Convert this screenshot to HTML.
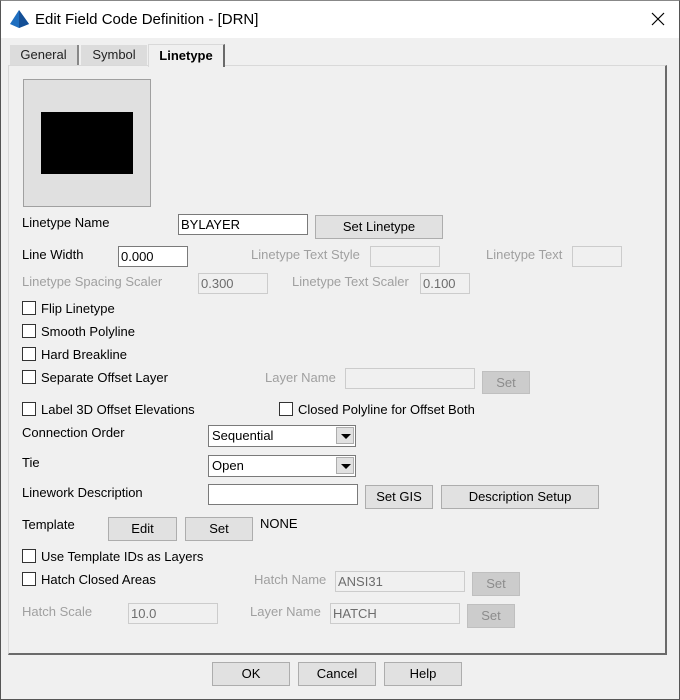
<!DOCTYPE html>
<html><head><style>
*{box-sizing:border-box;margin:0;padding:0}
body{width:680px;height:700px;background:#f0f0f0;font-family:"Liberation Sans",sans-serif;font-size:13px;color:#000;position:relative;overflow:hidden}
.a{position:absolute;white-space:nowrap}
.g{color:#a0a0a0}
.in{position:absolute;background:#fff;border:1px solid #7a7a7a;padding:2px 2px 0;font-size:13px;line-height:15px}
.dis{position:absolute;background:#f0f0f0;border:1px solid #ccc;color:#6d6d6d;padding:2px 2px 0;line-height:15px}
.btn{position:absolute;background:#e1e1e1;border:1px solid #adadad;text-align:center;line-height:21px}
.dbtn{position:absolute;background:#ccc;border:1px solid #bfbfbf;color:#8c8c8c;text-align:center;line-height:21px}
.cb{position:absolute;width:14px;height:14px;border:1px solid #333;background:#fff}
.sel{position:absolute;background:#fff;border:1px solid #7a7a7a;padding:2px 3px 0;line-height:15px}
.sel i{position:absolute;right:1px;top:1px;width:18px;height:17px;background:#e1e1e1;border:1px solid #adadad}
.sel i:after{content:"";position:absolute;left:4px;top:6px;border-left:5px solid transparent;border-right:5px solid transparent;border-top:5px solid #000}
</style></head><body>
<div class="a" style="left:0;top:0;width:680px;height:38px;background:#fff"></div>
<div class="a" style="left:0;top:0;width:680px;height:700px;border:1px solid #555;border-top:1px solid #888"></div>
<svg class="a" style="left:10px;top:10px" width="19" height="18" viewBox="0 0 19 18"><polygon points="9,0 0,14 9,18 19,14" fill="#1f6fc0"/><polygon points="9,0 9,18 19,14" fill="#144f96"/></svg>
<div class="a" style="left:35px;top:11px;font-size:15px">Edit Field Code Definition - [DRN]</div>
<svg class="a" style="left:651px;top:12px" width="14" height="14"><path d="M1 1L13 13M13 1L1 13" stroke="#000" stroke-width="1.2"/></svg>

<div class="a" style="left:8px;top:65px;width:659px;height:590px;border:1px solid #d9d9d9;border-right:2px solid #6a6a6a;border-bottom:2px solid #6a6a6a;background:#f0f0f0"></div>
<div class="a" style="left:10px;top:45px;width:69px;height:20px;background:#dcdcdc;border-right:2px solid #888;text-align:center;line-height:20px;color:#222">General</div>
<div class="a" style="left:81px;top:45px;width:66px;height:20px;background:#dcdcdc;text-align:center;line-height:20px;color:#222">Symbol</div>
<div class="a" style="left:148px;top:44px;width:77px;height:23px;background:#f0f0f0;border:1px solid #d9d9d9;border-right:2px solid #6a6a6a;border-bottom:none;text-align:center;line-height:22px;font-weight:bold">Linetype</div>

<div class="a" style="left:23px;top:79px;width:128px;height:128px;background:#e0e0e0;border:1px solid #a0a0a0"></div>
<div class="a" style="left:41px;top:112px;width:92px;height:62px;background:#000"></div>

<div class="a" style="left:22px;top:215px">Linetype Name</div>
<div class="in" style="left:178px;top:214px;width:130px;height:21px">BYLAYER</div>
<div class="btn" style="left:315px;top:215px;width:128px;height:24px">Set Linetype</div>

<div class="a" style="left:22px;top:247px">Line Width</div>
<div class="in" style="left:118px;top:246px;width:70px;height:21px">0.000</div>
<div class="a g" style="left:251px;top:247px">Linetype Text Style</div>
<div class="dis" style="left:370px;top:246px;width:70px;height:21px"></div>
<div class="a g" style="left:486px;top:247px">Linetype Text</div>
<div class="dis" style="left:572px;top:246px;width:50px;height:21px"></div>

<div class="a g" style="left:22px;top:274px">Linetype Spacing Scaler</div>
<div class="dis" style="left:198px;top:273px;width:70px;height:21px">0.300</div>
<div class="a g" style="left:292px;top:274px">Linetype Text Scaler</div>
<div class="dis" style="left:420px;top:273px;width:50px;height:21px">0.100</div>

<div class="cb" style="left:22px;top:301px"></div><div class="a" style="left:41px;top:301px">Flip Linetype</div>
<div class="cb" style="left:22px;top:324px"></div><div class="a" style="left:41px;top:324px">Smooth Polyline</div>
<div class="cb" style="left:22px;top:347px"></div><div class="a" style="left:41px;top:347px">Hard Breakline</div>
<div class="cb" style="left:22px;top:370px"></div><div class="a" style="left:41px;top:370px">Separate Offset Layer</div>
<div class="a g" style="left:265px;top:370px">Layer Name</div>
<div class="dis" style="left:345px;top:368px;width:130px;height:21px"></div>
<div class="dbtn" style="left:482px;top:371px;width:48px;height:23px">Set</div>

<div class="cb" style="left:22px;top:402px"></div><div class="a" style="left:41px;top:402px">Label 3D Offset Elevations</div>
<div class="cb" style="left:279px;top:402px"></div><div class="a" style="left:298px;top:402px">Closed Polyline for Offset Both</div>

<div class="a" style="left:22px;top:425px">Connection Order</div>
<div class="sel" style="left:208px;top:425px;width:148px;height:22px">Sequential<i></i></div>
<div class="a" style="left:22px;top:455px">Tie</div>
<div class="sel" style="left:208px;top:455px;width:148px;height:22px">Open<i></i></div>

<div class="a" style="left:22px;top:485px">Linework Description</div>
<div class="in" style="left:208px;top:484px;width:150px;height:21px"></div>
<div class="btn" style="left:365px;top:485px;width:68px;height:24px">Set GIS</div>
<div class="btn" style="left:441px;top:485px;width:158px;height:24px">Description Setup</div>

<div class="a" style="left:22px;top:517px">Template</div>
<div class="btn" style="left:108px;top:517px;width:69px;height:24px">Edit</div>
<div class="btn" style="left:185px;top:517px;width:68px;height:24px">Set</div>
<div class="a" style="left:260px;top:516px">NONE</div>

<div class="cb" style="left:22px;top:549px"></div><div class="a" style="left:41px;top:549px">Use Template IDs as Layers</div>
<div class="cb" style="left:22px;top:572px"></div><div class="a" style="left:41px;top:572px">Hatch Closed Areas</div>
<div class="a g" style="left:254px;top:572px">Hatch Name</div>
<div class="dis" style="left:335px;top:571px;width:130px;height:21px">ANSI31</div>
<div class="dbtn" style="left:472px;top:572px;width:48px;height:24px">Set</div>

<div class="a g" style="left:22px;top:604px">Hatch Scale</div>
<div class="dis" style="left:128px;top:603px;width:90px;height:21px">10.0</div>
<div class="a g" style="left:250px;top:604px">Layer Name</div>
<div class="dis" style="left:330px;top:603px;width:130px;height:21px">HATCH</div>
<div class="dbtn" style="left:467px;top:604px;width:48px;height:24px">Set</div>

<div class="btn" style="left:212px;top:662px;width:78px;height:24px">OK</div>
<div class="btn" style="left:298px;top:662px;width:78px;height:24px">Cancel</div>
<div class="btn" style="left:384px;top:662px;width:78px;height:24px">Help</div>
</body></html>
